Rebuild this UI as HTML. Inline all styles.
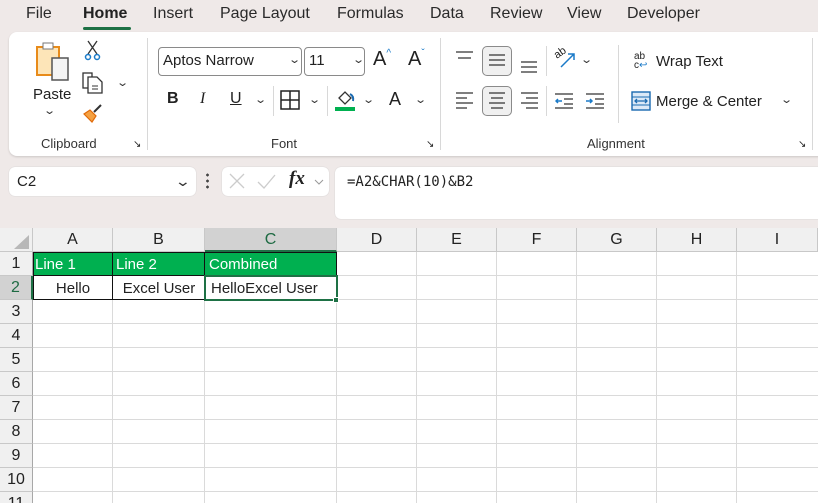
<!DOCTYPE html>
<html><head><meta charset="utf-8"><style>
*{margin:0;padding:0;box-sizing:border-box}
html,body{width:818px;height:503px;overflow:hidden}
body{background:#efe9e8;font-family:"Liberation Sans",sans-serif;color:#222}
#w{position:relative;width:818px;height:503px;overflow:hidden}
.a{position:absolute}
.tab{position:absolute;top:5px;font-size:16px;color:#2a2a2a}
.rib{position:absolute;left:9px;top:32px;width:830px;height:124px;background:#fff;border-radius:8px;box-shadow:0 1px 2px rgba(0,0,0,.15)}
.lbl{position:absolute;font-size:13px;color:#333}
.sep{position:absolute;width:1px;background:#d8d8d8}
.box{position:absolute;background:#fff;border:1px solid #8a8a8a;border-radius:4px;font-size:15px;padding-left:4px;line-height:26px}
.chev{position:absolute;font-size:11px;color:#333;transform:scaleX(1.4)}
.grid{position:absolute;left:0;top:228px;width:818px;height:275px;background:#fff}
.ch{position:absolute;top:228px;height:24px;background:#f0f0f0;border-right:1px solid #c8c8c8;border-bottom:1px solid #c8c8c8;text-align:center;font-size:16px;line-height:24px;color:#222}
.rh{position:absolute;left:0;width:33px;height:24px;background:#f0f0f0;border-bottom:1px solid #c8c8c8;border-right:1px solid #a8a8a8;text-align:center;font-size:16px;line-height:24px}
.hl{position:absolute;left:33px;width:785px;height:1px;background:#dadada}
.vl{position:absolute;top:252px;height:251px;width:1px;background:#dadada}
.cell{position:absolute;font-size:15px;line-height:23px;height:24px}
</style></head><body><div id="w">
<div class="tab" style="left:26px">File</div>
<div class="tab" style="left:83px;font-weight:bold;color:#222">Home</div>
<div class="a" style="left:83px;top:27px;width:48px;height:3px;background:#1e7145;border-radius:2px"></div>
<div class="tab" style="left:153px">Insert</div>
<div class="tab" style="left:220px">Page Layout</div>
<div class="tab" style="left:337px">Formulas</div>
<div class="tab" style="left:430px">Data</div>
<div class="tab" style="left:490px">Review</div>
<div class="tab" style="left:567px">View</div>
<div class="tab" style="left:627px">Developer</div>

<div class="rib"></div>
<svg class="a" style="left:34px;top:41px" width="38" height="40"><rect x="3" y="6" width="22" height="28" fill="#fde5b8" stroke="#e88b1a" stroke-width="2"/><rect x="9" y="2" width="10" height="6" fill="#fff" stroke="#777"/><rect x="18" y="17" width="16" height="22" fill="#f4f4f4" stroke="#555" stroke-width="1.5"/></svg>
<div class="a" style="left:33px;top:86px;font-size:15px">Paste</div>
<div class="chev" style="left:45px;top:104px">⌄</div>
<svg class="a" style="left:84px;top:40px" width="18" height="22"><path d="M4 1 L13 14 M13 1 L4 14" stroke="#333" stroke-width="1.3"/><circle cx="4" cy="17" r="2.5" fill="none" stroke="#1a7ac8" stroke-width="1.5"/><circle cx="13" cy="17" r="2.5" fill="none" stroke="#1a7ac8" stroke-width="1.5"/></svg>
<svg class="a" style="left:82px;top:72px" width="22" height="22"><rect x="1" y="1" width="9" height="15" fill="#fff" stroke="#333" stroke-width="1.3"/><path d="M6 5 H15 L20 10 V21 H6 Z" fill="#fff" stroke="#333" stroke-width="1.3"/><path d="M10 14 H16 M10 17 H16" stroke="#333"/></svg>
<div class="chev" style="left:118px;top:76px">⌄</div>
<svg class="a" style="left:82px;top:104px" width="22" height="20"><path d="M2 10 L10 18 L14 12 L8 6 Z" fill="#f5a142" stroke="#e06a0a" stroke-width="1.2"/><path d="M12 8 L19 1" stroke="#333" stroke-width="2"/></svg>
<div class="lbl" style="left:41px;top:136px">Clipboard</div>
<div class="a" style="left:133px;top:139px;font-size:10px">↘</div>
<div class="sep" style="left:147px;top:38px;height:112px"></div>
<div class="box" style="left:158px;top:47px;width:144px;height:29px">Aptos Narrow</div>
<div class="chev" style="left:290px;top:53px">⌄</div>
<div class="box" style="left:304px;top:47px;width:61px;height:29px">11</div>
<div class="chev" style="left:354px;top:53px">⌄</div>
<div class="a" style="left:373px;top:48px;font-size:20px">A<span style="font-size:10px;vertical-align:top;color:#1a7ac8">^</span></div>
<div class="a" style="left:408px;top:48px;font-size:20px">A<span style="font-size:10px;vertical-align:top;color:#1a7ac8">ˇ</span></div>
<div class="a" style="left:167px;top:90px;font-size:16px;font-weight:bold">B</div>
<div class="a" style="left:200px;top:90px;font-size:16px;font-style:italic;font-family:'Liberation Serif',serif">I</div>
<div class="a" style="left:230px;top:90px;font-size:16px;text-decoration:underline">U</div>
<div class="chev" style="left:256px;top:93px">⌄</div>
<div class="sep" style="left:273px;top:86px;height:30px"></div>
<svg class="a" style="left:280px;top:90px" width="20" height="20"><rect x="1" y="1" width="18" height="18" fill="none" stroke="#222" stroke-width="1.5"/><path d="M10 1V19M1 10H19" stroke="#222" stroke-width="1.5"/></svg>
<div class="chev" style="left:310px;top:93px">⌄</div>
<div class="sep" style="left:327px;top:86px;height:30px"></div>
<svg class="a" style="left:335px;top:88px" width="22" height="24"><path d="M4 10 L10 4 L16 10 L10 16 Z" fill="none" stroke="#333" stroke-width="1.3"/><path d="M15 6 Q19 8 18 13" stroke="#1a6ab0" stroke-width="2" fill="none"/><rect x="0" y="19" width="20" height="4" fill="#00b050"/></svg>
<div class="chev" style="left:364px;top:93px">⌄</div>
<div class="a" style="left:389px;top:89px;font-size:18px">A</div>
<div class="chev" style="left:416px;top:93px">⌄</div>
<div class="lbl" style="left:271px;top:136px">Font</div>
<div class="a" style="left:426px;top:139px;font-size:10px">↘</div>
<div class="sep" style="left:440px;top:38px;height:112px"></div>
<div class="a" style="left:482px;top:46px;width:30px;height:30px;background:#f0f0f0;border:1px solid #8a8a8a;border-radius:5px"></div>
<div class="a" style="left:482px;top:86px;width:30px;height:30px;background:#f0f0f0;border:1px solid #8a8a8a;border-radius:5px"></div>
<svg class="a" style="left:455px;top:48px" width="90" height="70" stroke="#333" stroke-width="1.2">
<path d="M1 4H18M3 10H16"/>
<path d="M34 7H50M34 12H50M34 17H50"/>
<path d="M66 14H82M66 19H82M66 24H82"/>
<path d="M1 45H18M1 50H12M1 55H18M1 60H12"/>
<path d="M34 45H50M36 50H48M34 55H50M36 60H48"/>
<path d="M66 45H83M71 50H83M66 55H83M71 60H83"/>
</svg>
<svg class="a" style="left:555px;top:93px" width="20" height="16" stroke="#333" stroke-width="1.2"><path d="M0 1H18M9 6H18M9 11H18M0 15H18"/><path d="M7 8H1M3 6L1 8L3 10" stroke="#1a7ac8" stroke-width="1.5" fill="none"/></svg>
<svg class="a" style="left:586px;top:93px" width="20" height="16" stroke="#333" stroke-width="1.2"><path d="M0 1H18M9 6H18M9 11H18M0 15H18"/><path d="M0 8H6M4 6L6 8L4 10" stroke="#1a7ac8" stroke-width="1.5" fill="none"/></svg>
<div class="sep" style="left:546px;top:46px;height:30px"></div>
<div class="sep" style="left:546px;top:86px;height:30px"></div>
<div class="a" style="left:554px;top:47px;font-size:11px;transform:rotate(-35deg)">ab</div>
<svg class="a" style="left:560px;top:52px" width="16" height="16"><path d="M1 15L14 2M8 2H14V8" stroke="#1a7ac8" stroke-width="1.5" fill="none"/></svg>
<div class="chev" style="left:582px;top:53px">⌄</div>
<div class="sep" style="left:618px;top:45px;height:78px"></div>
<div class="a" style="left:634px;top:52px;font-size:10px;line-height:9px">ab<br>c<span style="color:#1a7ac8">↩</span></div>
<div class="a" style="left:656px;top:53px;font-size:15px">Wrap Text</div>
<svg class="a" style="left:631px;top:91px" width="20" height="20"><rect x="1" y="1" width="18" height="18" fill="#dbe9f7" stroke="#1a6ab0" stroke-width="1.4"/><path d="M1 6H19M1 14H19" stroke="#1a6ab0"/><path d="M4 10H16M6 8L4 10L6 12M14 8L16 10L14 12" stroke="#1a6ab0" stroke-width="1.3" fill="none"/></svg>
<div class="a" style="left:656px;top:93px;font-size:15px">Merge &amp; Center</div>
<div class="chev" style="left:782px;top:93px">⌄</div>
<div class="lbl" style="left:587px;top:136px">Alignment</div>
<div class="a" style="left:798px;top:139px;font-size:10px">↘</div>
<div class="sep" style="left:812px;top:38px;height:112px"></div>

<div class="a" style="left:9px;top:167px;width:187px;height:29px;background:#fff;border-radius:6px;box-shadow:0 0 1px #bbb;font-size:15px;line-height:29px;padding-left:8px">C2</div>
<div class="chev" style="left:177px;top:173px;font-size:14px">⌄</div>
<div class="a" style="left:206px;top:172px;width:3px;height:18px;background:radial-gradient(circle,#444 1.3px,transparent 1.5px) 0 0/3px 6px"></div>
<div class="a" style="left:222px;top:167px;width:107px;height:29px;background:#fff;border-radius:6px;box-shadow:0 0 1px #bbb"></div>
<svg class="a" style="left:228px;top:172px" width="100" height="20"><path d="M2 2L16 16M16 2L2 16" stroke="#ccc" stroke-width="1.3"/><path d="M30 10L36 16L47 3" stroke="#ccc" stroke-width="1.3" fill="none"/><path d="M87 8L91 12L95 8" stroke="#999" fill="none"/></svg>
<div class="a" style="left:289px;top:168px;font-size:19px;font-style:italic;font-family:'Liberation Serif',serif;font-weight:bold">fx</div>
<div class="a" style="left:335px;top:167px;width:490px;height:52px;background:#fff;border-radius:6px;box-shadow:0 0 1px #bbb;font-family:'DejaVu Sans Mono','Liberation Mono',monospace;font-size:14px;padding:5px 0 0 12px;line-height:20px">=A2&amp;CHAR(10)&amp;B2</div>

<div class="grid"></div>
<div class="a" style="left:0;top:228px;width:33px;height:24px;background:#f0f0f0;border-right:1px solid #c8c8c8;border-bottom:1px solid #c8c8c8"></div>
<svg class="a" style="left:14px;top:235px" width="16" height="14"><path d="M15 0V14H0Z" fill="#b8b8b8"/></svg>
<div class="ch" style="left:33px;width:80px">A</div>
<div class="ch" style="left:113px;width:92px">B</div>
<div class="ch" style="left:205px;width:132px;background:#d2d2d2;color:#1e6b43;border-bottom:2px solid #1e7145">C</div>
<div class="ch" style="left:337px;width:80px">D</div>
<div class="ch" style="left:417px;width:80px">E</div>
<div class="ch" style="left:497px;width:80px">F</div>
<div class="ch" style="left:577px;width:80px">G</div>
<div class="ch" style="left:657px;width:80px">H</div>
<div class="ch" style="left:737px;width:81px">I</div>

<div class="rh" style="top:252px">1</div>
<div class="rh" style="top:276px;background:#d2d2d2;color:#1e6b43;border-right:2px solid #1e7145">2</div>
<div class="rh" style="top:300px">3</div>
<div class="rh" style="top:324px">4</div>
<div class="rh" style="top:348px">5</div>
<div class="rh" style="top:372px">6</div>
<div class="rh" style="top:396px">7</div>
<div class="rh" style="top:420px">8</div>
<div class="rh" style="top:444px">9</div>
<div class="rh" style="top:468px">10</div>
<div class="rh" style="top:492px">11</div>

<div class="hl" style="top:275px"></div><div class="hl" style="top:299px"></div><div class="hl" style="top:323px"></div><div class="hl" style="top:347px"></div><div class="hl" style="top:371px"></div><div class="hl" style="top:395px"></div><div class="hl" style="top:419px"></div><div class="hl" style="top:443px"></div><div class="hl" style="top:467px"></div><div class="hl" style="top:491px"></div>
<div class="vl" style="left:112px"></div><div class="vl" style="left:204px"></div><div class="vl" style="left:336px"></div><div class="vl" style="left:416px"></div><div class="vl" style="left:496px"></div><div class="vl" style="left:576px"></div><div class="vl" style="left:656px"></div><div class="vl" style="left:736px"></div>

<div class="a" style="left:33px;top:252px;width:304px;height:24px;background:#00b050"></div>
<div class="cell" style="left:35px;top:253px;color:#fff">Line 1</div>
<div class="cell" style="left:116px;top:253px;color:#fff">Line 2</div>
<div class="cell" style="left:209px;top:253px;color:#fff">Combined</div>
<div class="a" style="left:33px;top:252px;width:304px;height:48px;border:1px solid #111"></div>
<div class="a" style="left:112px;top:252px;width:1px;height:48px;background:#111"></div>
<div class="a" style="left:204px;top:252px;width:1px;height:48px;background:#111"></div>
<div class="a" style="left:33px;top:275px;width:304px;height:1px;background:#111"></div>
<div class="cell" style="left:33px;top:277px;width:80px;text-align:center">Hello</div>
<div class="cell" style="left:113px;top:277px;width:92px;text-align:center">Excel User</div>
<div class="cell" style="left:211px;top:277px">HelloExcel User</div>
<div class="a" style="left:204px;top:275px;width:134px;height:26px;border:2px solid #1e7145"></div>
<div class="a" style="left:333px;top:297px;width:6px;height:6px;background:#1e7145;border:1px solid #fff"></div>
</div></body></html>
